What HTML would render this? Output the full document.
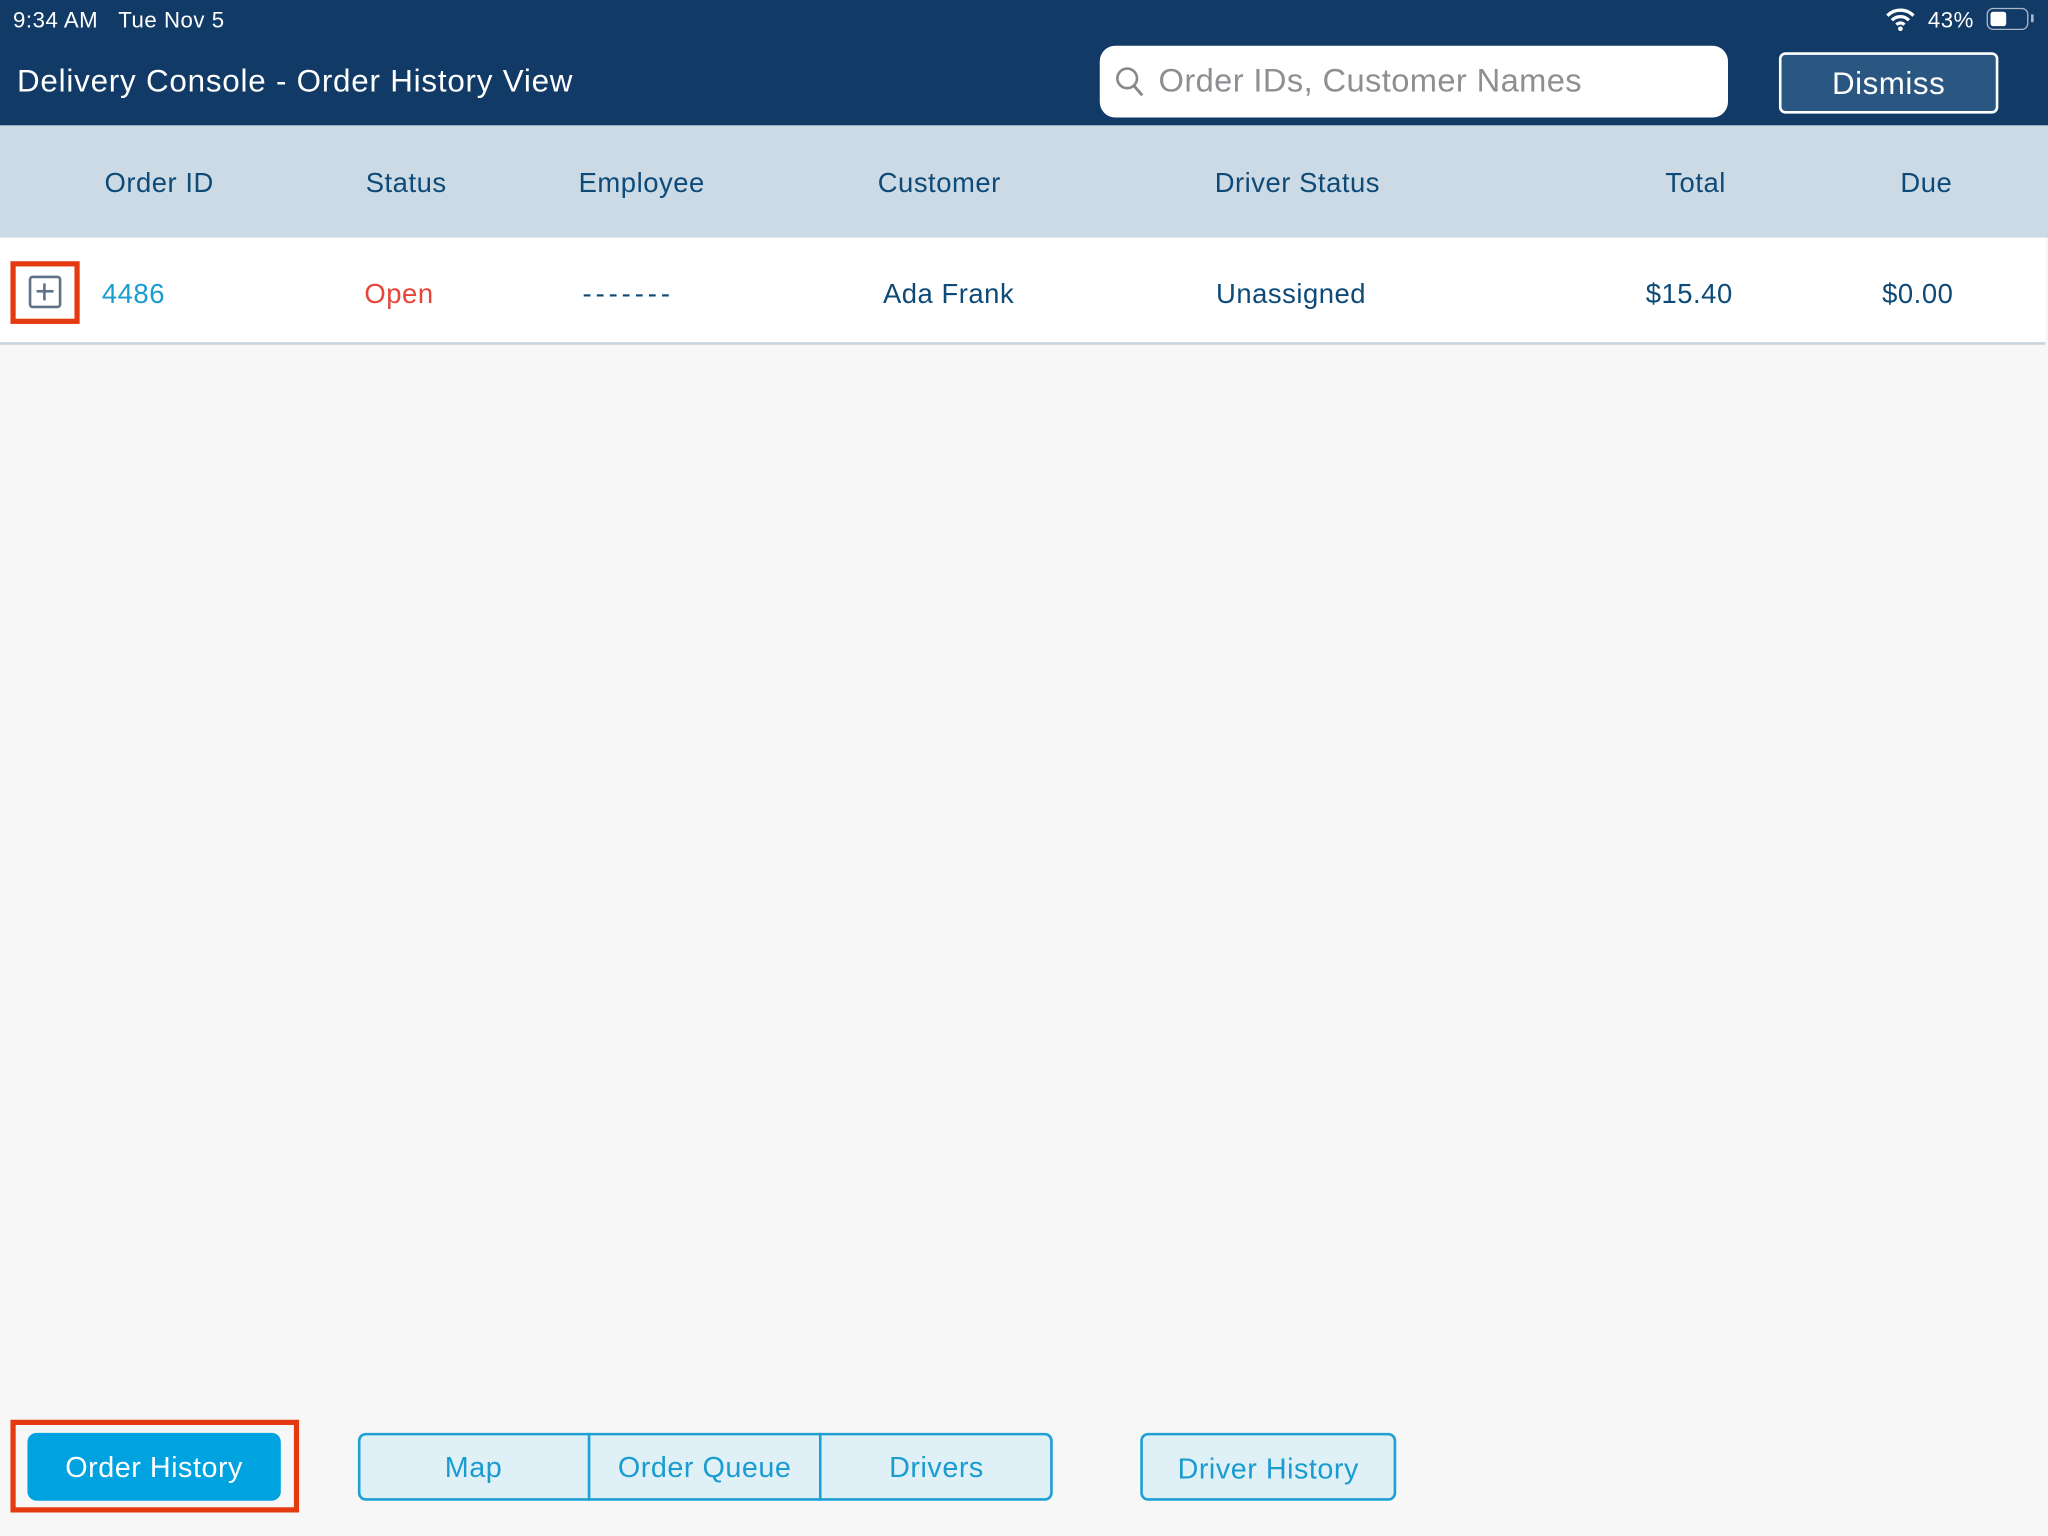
<!DOCTYPE html>
<html><head><meta charset="utf-8"><style>
html,body{margin:0;padding:0;width:2048px;height:1536px;overflow:hidden;background:#f7f7f7}
#w{position:absolute;left:0;top:0;width:1568px;height:1176px;transform:scale(1.306122);transform-origin:0 0;font-family:"Liberation Sans",sans-serif;background:#f7f7f7;letter-spacing:0.4px}
.a{position:absolute;white-space:nowrap}
.h{color:#0d4a78;font-size:21px;top:129px}
.r{color:#0d4a78;font-size:21px;top:214px}
.seg{position:absolute;top:1097px;height:52px;background:#dff0f7;border:2px solid #1ea0d2;color:#1a9cd0;font-size:22px;display:flex;align-items:center;justify-content:center;box-sizing:border-box}
</style></head><body><div id="w">
<div class="a" style="left:0;top:0;width:1568px;height:96px;background:#123a66"></div>
<div class="a" style="left:10px;top:6px;color:#fff;font-size:17px">9:34 AM&nbsp;&nbsp;&nbsp;Tue Nov 5</div>
<svg class="a" style="left:1443px;top:6px" width="24" height="18" viewBox="0 0 24 18"><path d="M2 6a14 14 0 0 1 20 0M5.5 9.5a9 9 0 0 1 13 0M9 13a4 4 0 0 1 6 0" stroke="#fff" stroke-width="2.5" fill="none"/><circle cx="12" cy="16" r="1.8" fill="#fff"/></svg>
<div class="a" style="left:1476px;top:6px;color:#fff;font-size:17px">43%</div>
<div class="a" style="left:1521px;top:6px;width:32px;height:17px;border:1.5px solid #aab8c8;border-radius:5px;box-sizing:border-box"></div>
<div class="a" style="left:1524px;top:9px;width:12px;height:11px;background:#fff;border-radius:2px"></div>
<div class="a" style="left:1555px;top:11px;width:2px;height:6px;background:#aab8c8"></div>
<div class="a" style="left:13px;top:49px;color:#fff;font-size:24px;letter-spacing:0.6px">Delivery Console - Order History View</div>
<div class="a" style="left:842px;top:35px;width:481px;height:55px;background:#fff;border-radius:12px"></div>
<svg class="a" style="left:853px;top:50px" width="24" height="26" viewBox="0 0 24 26"><circle cx="10" cy="10" r="7.5" stroke="#888" stroke-width="2" fill="none"/><path d="M15.5 16l6 7" stroke="#888" stroke-width="2.2"/></svg>
<div class="a" style="left:887px;top:48px;color:#8e8e93;font-size:25px;letter-spacing:0.3px">Order IDs, Customer Names</div>
<div class="a" style="left:1362px;top:40px;width:168px;height:47px;border:2px solid #fff;border-radius:5px;background:#2a5682;box-sizing:border-box;color:#fff;font-size:24px;text-align:center;line-height:45px">Dismiss</div>
<div class="a" style="left:0;top:96px;width:1568px;height:86px;background:#cbdae4"></div>
<div class="a h" style="left:80px">Order ID</div>
<div class="a h" style="left:280px">Status</div>
<div class="a h" style="left:443px">Employee</div>
<div class="a h" style="left:672px">Customer</div>
<div class="a h" style="left:930px">Driver Status</div>
<div class="a h" style="left:1275px">Total</div>
<div class="a h" style="left:1455px">Due</div>
<div class="a" style="left:0;top:182px;width:1566px;height:80px;background:#fff;border-bottom:2px solid #c8d3dc"></div>
<div class="a" style="left:8px;top:200px;width:53px;height:48px;border:4px solid #e43a12;box-sizing:border-box"></div>
<div class="a" style="left:22px;top:211px;width:25px;height:25px;border:2px solid #5e7288;border-radius:3px;box-sizing:border-box"></div>
<div class="a" style="left:28px;top:222px;width:13px;height:2px;background:#5e7288"></div>
<div class="a" style="left:33px;top:217px;width:2px;height:13px;background:#5e7288"></div>
<div class="a r" style="left:78px;color:#1a9cd0">4486</div>
<div class="a r" style="left:279px;color:#e8443a">Open</div>
<div class="a r" style="left:446px;letter-spacing:3px">-------</div>
<div class="a r" style="left:676px">Ada Frank</div>
<div class="a r" style="left:931px">Unassigned</div>
<div class="a r" style="left:1260px">$15.40</div>
<div class="a r" style="left:1441px">$0.00</div>
<div class="a" style="left:8px;top:1087px;width:221px;height:71px;border:4px solid #e43a12;box-sizing:border-box"></div>
<div class="a" style="left:21px;top:1097px;width:194px;height:52px;background:#00a2e0;border-radius:7px;color:#fff;font-size:22px;text-align:center;line-height:54px">Order History</div>
<div class="seg" style="left:274px;width:532px;border-radius:6px"></div>
<div class="a" style="left:450px;top:1097px;width:2px;height:52px;background:#1ea0d2"></div>
<div class="a" style="left:627px;top:1097px;width:2px;height:52px;background:#1ea0d2"></div>
<div class="a" style="left:274px;top:1111px;width:177px;text-align:center;color:#1a9cd0;font-size:22px">Map</div>
<div class="a" style="left:451px;top:1111px;width:177px;text-align:center;color:#1a9cd0;font-size:22px">Order Queue</div>
<div class="a" style="left:628px;top:1111px;width:178px;text-align:center;color:#1a9cd0;font-size:22px">Drivers</div>
<div class="seg" style="left:873px;width:196px;border-radius:6px;padding-top:3px">Driver History</div>
</div></body></html>
